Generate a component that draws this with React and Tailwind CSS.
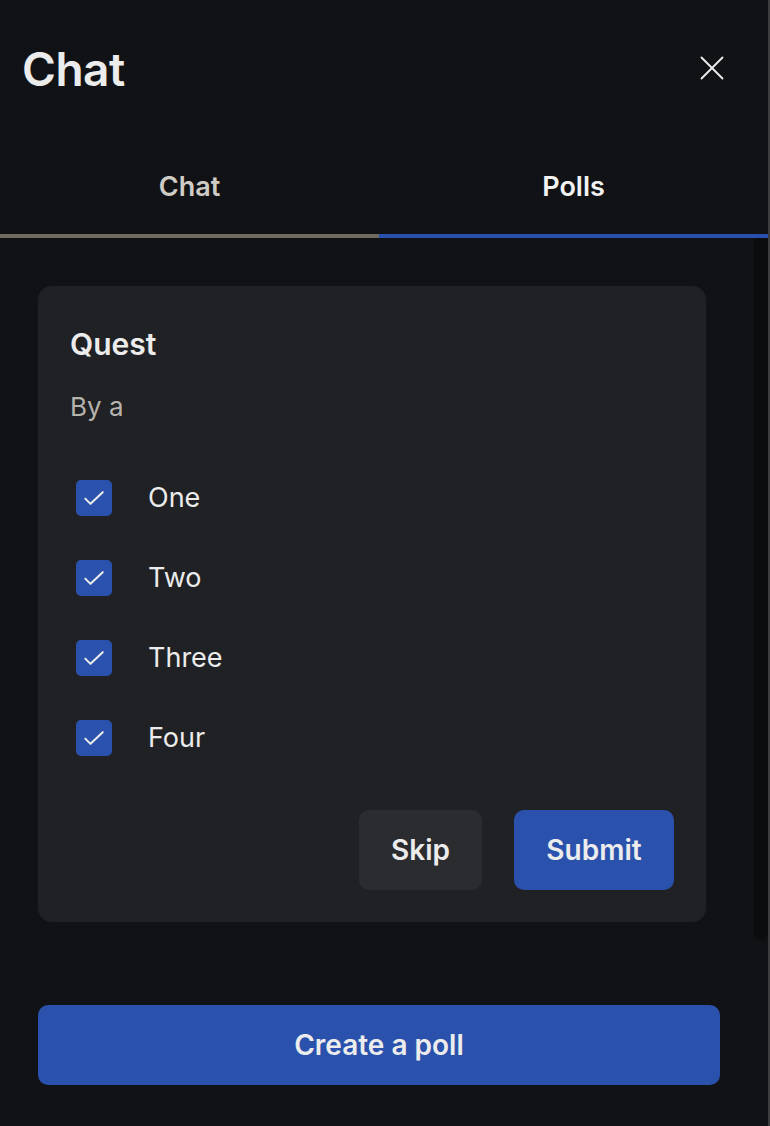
import React, { useState } from "react";

const options = ["One", "Two", "Three", "Four"];

const CheckIcon = () => (
    <svg viewBox="0 0 24 24" className="w-[28px] h-[28px]" fill="none" stroke="#ececec" strokeWidth="1.7" strokeLinecap="round" strokeLinejoin="round">
        <path d="M4.5 12.5l4.5 4.5L19.5 7" />
    </svg>
);

const App = () => {
    const [tab] = useState("polls");
    const [checked, setChecked] = useState([true, true, true, true]);

    return (
        <div
            className="h-[1126px] w-[770px] bg-[#111215] text-[#ececec] flex flex-col overflow-hidden border-r-2 border-[#3c3c3e]"
            style={{ fontFamily: "Inter, 'Liberation Sans', sans-serif" }}
        >
            {/* header */}
            <div className="h-[138px] shrink-0 flex items-start justify-between pl-[22px] pr-[42px] pt-[42px]">
                <h1 className="text-[46px] leading-[54px] font-semibold tracking-[-0.5px] text-[#ececec]">Chat</h1>
                <button className="mt-[12px] w-[28px] h-[28px] flex items-center justify-center">
                    <svg viewBox="0 0 24 24" className="w-[28px] h-[28px]" fill="none" stroke="#ececec" strokeWidth="1.6" strokeLinecap="round">
                        <path d="M3 3l18 18M21 3L3 21" />
                    </svg>
                </button>
            </div>

            {/* tabs */}
            <div className="flex shrink-0">
                <button className="w-[379px] h-[100px] flex items-start justify-center pt-[29px] border-b-4 border-[#6f6a60]">
                    <span className={`text-[27px] font-semibold ${tab === "chat" ? "text-white" : "text-[#cfccc6]"}`}>Chat</span>
                </button>
                <button className="flex-1 h-[100px] flex items-start justify-center pt-[29px] border-b-4 border-[#2a50ad]">
                    <span className="text-[27px] font-semibold text-[#f2f2f2]">Polls</span>
                </button>
            </div>

            {/* body */}
            <div className="flex-1 flex min-h-0">
                <div className="flex-1 flex flex-col pl-[38px] pr-[34px] pt-[48px]">
                    <div className="w-[668px] bg-[#202124] rounded-[14px] px-[32px] pt-[38px] pb-[32px]">
                        <h2 className="text-[30px] leading-[40px] font-semibold text-[#ececec]">Quest</h2>
                        <p className="mt-[28px] text-[26px] leading-[30px] text-[#b5b3ae]">By a</p>

                        <div className="mt-[58px] flex flex-col gap-[44px] pl-[6px]">
                            {options.map((opt, i) => (
                                <label key={opt} className="flex items-center gap-[36px] cursor-pointer">
                                    <span
                                        onClick={() => setChecked(checked.map((c, j) => (j === i ? !c : c)))}
                                        className={`w-[36px] h-[36px] rounded-[5px] flex items-center justify-center ${checked[i] ? "bg-[#2a52ad]" : "border-2 border-[#6b6b6b]"}`}
                                    >
                                        {checked[i] && <CheckIcon />}
                                    </span>
                                    <span className="text-[27px] leading-[36px] text-[#ececec]">{opt}</span>
                                </label>
                            ))}
                        </div>

                        <div className="mt-[54px] flex justify-end gap-[32px]">
                            <button className="w-[123px] h-[80px] rounded-[10px] bg-[#2b2c2f] text-[28px] font-semibold text-[#ececec]">Skip</button>
                            <button className="w-[160px] h-[80px] rounded-[10px] bg-[#2a52ad] text-[28px] font-semibold text-[#ececec]">Submit</button>
                        </div>
                    </div>

                    <button className="mt-[83px] w-[682px] h-[80px] rounded-[10px] bg-[#2a52ad] text-[28px] font-semibold text-[#ececec]">
                        Create a poll
                    </button>
                </div>
                {/* scrollbar */}
                <div className="w-[14px] shrink-0 flex flex-col">
                    <div className="h-[702px] w-[14px] rounded-b-full bg-[#0b0c0e]" />
                </div>
            </div>
        </div>
    );
};

export default App;
